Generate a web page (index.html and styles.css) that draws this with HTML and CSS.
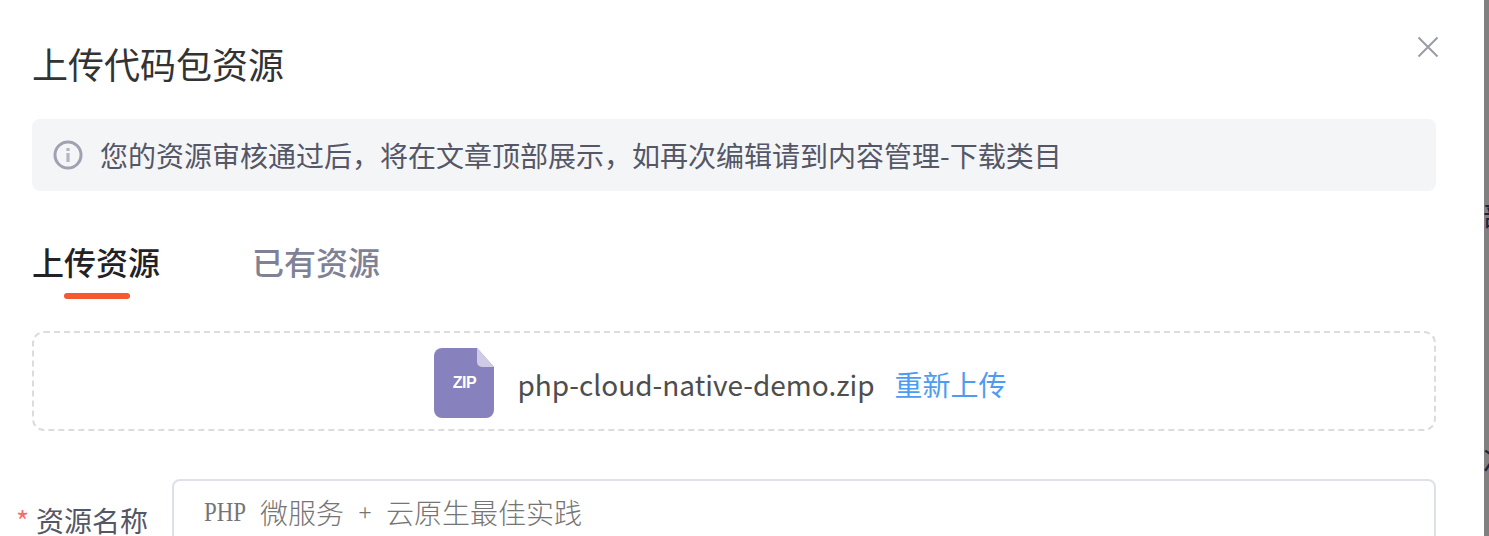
FILE: index.html
```html
<!DOCTYPE html>
<html lang="zh-CN">
<head>
    <meta charset="UTF-8">
    <title>上传代码包资源</title>
    <link rel="stylesheet" href="styles.css">
</head>
<body>
    <div class="dialog">
        <div class="dialog-header">
            <h2 class="dialog-title">上传代码包资源</h2>
            <svg class="close-icon" width="22" height="22" viewBox="0 0 22 22">
                <path d="M1.5 1.5L20.5 20.5M20.5 1.5L1.5 20.5" stroke="#9a9ca6" stroke-width="2" fill="none"/>
            </svg>
        </div>

        <div class="notice">
            <svg class="info-icon" width="30" height="30" viewBox="0 0 30 30">
                <circle cx="15" cy="15" r="13" stroke="#a0a1b2" stroke-width="3" fill="none"/>
                <rect x="13.4" y="13" width="3.2" height="9" fill="#b4b5c2"/>
                <rect x="13.4" y="8" width="3.2" height="3" fill="#b4b5c2"/>
            </svg>
            <span>您的资源审核通过后，将在文章顶部展示，如再次编辑请到内容管理-下载类目</span>
        </div>

        <div class="tabs">
            <div class="tab active">上传资源</div>
            <div class="tab">已有资源</div>
        </div>

        <div class="upload-box">
            <div class="zip-icon">
                <svg width="60" height="70" viewBox="0 0 60 70">
                    <path d="M8 0H43L60 19V62a8 8 0 0 1-8 8H8a8 8 0 0 1-8-8V8a8 8 0 0 1 8-8z" fill="#8781bd"/>
                    <path d="M43 0L60 19H48a5 5 0 0 1-5-5z" fill="#cfcae6"/>
                </svg>
                <span class="zip-label">ZIP</span>
            </div>
            <span class="file-name">php-cloud-native-demo.zip</span>
            <a class="reupload">重新上传</a>
        </div>

        <div class="form-row">
            <label class="form-label"><span class="required">*</span>资源名称</label>
            <div class="form-input">
                <span class="narrow">PHP</span>
                <span>微服务</span>
                <span class="plus">+</span>
                <span>云原生最佳实践</span>
            </div>
        </div>
    </div>

    <div class="page-behind">
        <span class="behind-text top">部</span>
        <span class="behind-text bottom">次</span>
    </div>
</body>
</html>
```

FILE: styles.css
```css
* {
    box-sizing: border-box;
}

html, body {
    height: 100%;
}

body {
    margin: 0;
    display: flex;
    overflow: hidden;
    background-color: #808080;
    font-family: "Noto Sans CJK SC", "Noto Sans", sans-serif;
}

.dialog {
    width: 1484px;
    height: 536px;
    flex-shrink: 0;
    padding: 31px 48px 0 32px;
    background-color: #fff;
    overflow: hidden;
}

.dialog-header {
    display: flex;
    justify-content: space-between;
    align-items: flex-start;
}

.dialog-title {
    margin: 0;
    font-size: 36px;
    font-weight: 400;
    line-height: 64px;
    color: #333;
}

.close-icon {
    margin-top: 5px;
    margin-right: -3px;
}

.notice {
    display: flex;
    align-items: center;
    gap: 17px;
    height: 72px;
    margin-top: 24px;
    padding-left: 21px;
    background-color: #f4f5f7;
    border-radius: 8px;
    font-size: 28px;
    color: #555666;
}

.tabs {
    display: flex;
    gap: 92px;
    margin-top: 45px;
}

.tab {
    position: relative;
    height: 63px;
    font-size: 32px;
    font-weight: 500;
    line-height: 50px;
    color: #7f8194;
}

.tab.active {
    color: #222226;
}

.tab.active::after {
    content: "";
    position: absolute;
    left: 32px;
    bottom: 0;
    width: 66px;
    height: 6px;
    border-radius: 3px;
    background-color: #f5592f;
}

.upload-box {
    display: flex;
    justify-content: center;
    align-items: center;
    height: 100px;
    margin-top: 32px;
    padding: 4px 28px 0 0;
    border: 2px dashed #dcdcdc;
    border-radius: 12px;
}

.zip-icon {
    position: relative;
    height: 70px;
    margin-left: 1px;
}

.zip-icon svg {
    display: block;
}

.zip-label {
    position: absolute;
    left: 0;
    right: 0;
    top: 25px;
    font-family: "Liberation Sans", sans-serif;
    font-size: 16px;
    font-weight: 700;
    line-height: 20px;
    text-align: center;
    letter-spacing: -0.5px;
    color: #fff;
}

.file-name {
    margin: 2px 0 0 23px;
    font-size: 28px;
    color: #4d4d4d;
}

.reupload {
    margin: 2px 0 0 20px;
    font-size: 28px;
    color: #4d9cf0;
}

.form-row {
    display: flex;
    margin-top: 48px;
    margin-left: -16px;
}

.form-label {
    width: 156px;
    padding-top: 21px;
    font-size: 28px;
    line-height: 40px;
    color: #555666;
    white-space: nowrap;
}

.required {
    margin-right: 7px;
    font-size: 28px;
    color: #f56c6c;
}

.form-input {
    flex: 1;
    display: flex;
    gap: 14px;
    height: 90px;
    padding: 10px 30px;
    border: 2px solid #dfe1e8;
    border-radius: 8px;
    font-size: 28px;
    font-weight: 300;
    line-height: 42px;
    color: #757575;
}

.narrow {
    width: 42px;
    font-family: "Liberation Serif", serif;
    font-weight: 400;
    transform: scaleX(0.82);
    transform-origin: left;
}

.plus {
    width: 14px;
    font-family: "Liberation Serif", serif;
    font-size: 24px;
    text-align: center;
}

.page-behind {
    flex: 1;
    position: relative;
    overflow: hidden;
}

.behind-text {
    position: absolute;
    left: -1px;
    font-size: 28px;
    line-height: 32px;
    color: #222240;
}

.behind-text.top {
    top: 198px;
}

.behind-text.bottom {
    top: 444px;
}
```
